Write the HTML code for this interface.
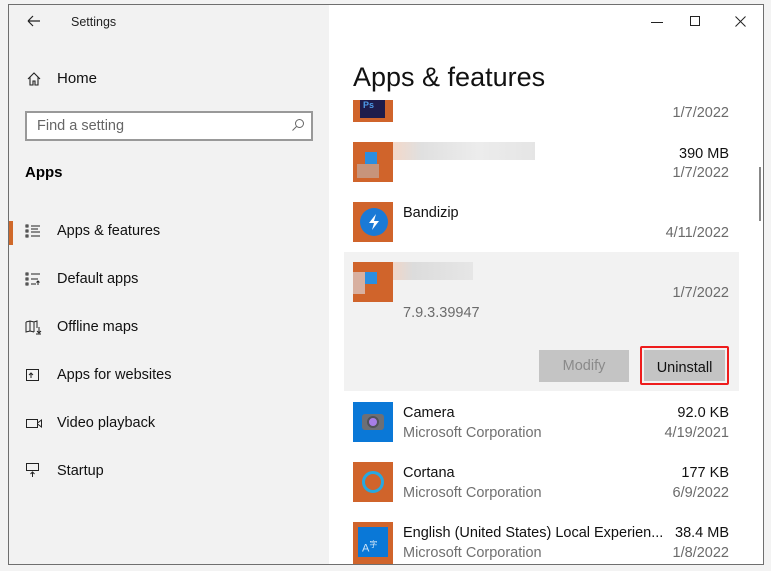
<!DOCTYPE html>
<html><head><style>
*{margin:0;padding:0;box-sizing:border-box}
body{width:771px;height:571px;background:#f3f3f3;position:relative;overflow:hidden;font-family:"Liberation Sans",sans-serif;color:#000}
.win{position:absolute;left:8px;top:4px;width:756px;height:561px;border:1px solid #6f6f6f;background:#fff;overflow:hidden}
.side{position:absolute;left:0;top:0;width:320px;height:100%;background:#f2f2f2}
.t{position:absolute;white-space:nowrap}
.nav{position:absolute;left:48px;font-size:14.5px;color:#111}
.ic{position:absolute;left:17px}
.sq{position:absolute;width:40px;height:40px}
.r{position:absolute;right:0;text-align:right;font-size:14.5px;color:#6b6b6b}
</style></head><body>
<div class="win">
<div class="side">
 <svg class="ic" style="left:18px;top:10px" width="14" height="12"><path d="M1 6H13M1 6L6 1M1 6L6 11" stroke="#222" fill="none" stroke-width="1.2"/></svg>
 <div class="t" style="left:62px;top:10px;font-size:12.5px;color:#222">Settings</div>
 <svg class="ic" style="top:66px" width="16" height="16"><path d="M2 8L8 2L14 8M4 6V14H7V10H9V14H12V6" stroke="#222" fill="none" stroke-width="1.1"/></svg>
 <div class="t" style="left:48px;top:65px;font-size:15px;color:#111">Home</div>
 <div style="position:absolute;left:16px;top:106px;width:288px;height:30px;border:2px solid #999;background:#fff"></div>
 <div class="t" style="left:28px;top:113px;font-size:14.5px;color:#666">Find a setting</div>
 <svg style="position:absolute;left:282px;top:113px" width="14" height="14"><circle cx="8.5" cy="5.5" r="4" stroke="#666" fill="none"/><path d="M5.5 8.5L1.5 12.5" stroke="#666"/></svg>
 <div class="t" style="left:16px;top:159px;font-size:15px;font-weight:bold">Apps</div>
 <div style="position:absolute;left:0;top:216px;width:4px;height:24px;background:#d0692a"></div>
 <svg class="ic" style="left:16px;top:219px" width="16" height="14"><path d="M1 1h2v2H1zM1 6h2v2H1zM1 11h2v2H1zM6 2h9M6 5h7M6 8h9M6 12h9" stroke="#222" fill="none"/></svg>
 <div class="nav" style="top:218px">Apps &amp; features</div>
 <svg class="ic" style="left:16px;top:267px" width="16" height="14"><path d="M1 1h2v2H1zM1 6h2v2H1zM1 11h2v2H1zM6 2h9M6 7h7M6 12h5M13 13V9M11.5 10.5L13 9l1.5 1.5" stroke="#222" fill="none"/></svg>
 <div class="nav" style="top:266px">Default apps</div>
 <svg class="ic" style="left:16px;top:315px" width="17" height="15"><path d="M1 2L5 1L9 2L12 1V8M1 2V12L5 11L9 12M5 1V11M9 2V12M14 7V13M12 11L14 13L16 11M11 14H16" stroke="#222" fill="none"/></svg>
 <div class="nav" style="top:314px">Offline maps</div>
 <svg class="ic" style="left:16px;top:363px" width="16" height="14"><path d="M1.5 1.5H13.5V12.5H1.5ZM6 10V5M4 7L6 5L8 7" stroke="#222" fill="none"/></svg>
 <div class="nav" style="top:362px">Apps for websites</div>
 <svg class="ic" style="left:16px;top:412px" width="18" height="12"><path d="M1.5 2.5H12.5V10.5H1.5ZM12.5 6L16.5 3V10L12.5 7" stroke="#222" fill="none"/></svg>
 <div class="nav" style="top:410px">Video playback</div>
 <svg class="ic" style="left:16px;top:457px" width="16" height="16"><path d="M1.5 1.5H13.5V8.5H1.5ZM7.5 15V10M5.5 12L7.5 10L9.5 12" stroke="#222" fill="none"/></svg>
 <div class="nav" style="top:458px">Startup</div>
</div>
<div style="position:absolute;left:642px;top:17px;width:12px;height:1px;background:#222"></div>
<div style="position:absolute;left:681px;top:11px;width:10px;height:10px;border:1px solid #222"></div>
<svg style="position:absolute;left:726px;top:11px" width="11" height="11"><path d="M0.5 0.5L10.5 10.5M10.5 0.5L0.5 10.5" stroke="#222"/></svg>
<div class="t" style="left:344px;top:57px;font-size:27px;color:#111">Apps &amp; features</div>
<div style="position:absolute;left:750px;top:162px;width:2px;height:54px;background:#888"></div>
</div>
<div class="sq" style="left:353px;top:100px;height:22px;background:#d0642b"><div style="position:absolute;left:7px;top:0;width:25px;height:18px;background:#1e1c4b;color:#4d9be8;font-size:9px;font-weight:bold;padding-left:3px">Ps</div></div>
<div class="r" style="left:344px;width:385px;top:105px">1/7/2022</div>

<div class="sq" style="left:353px;top:142px;background:#d0642b"><div style="position:absolute;left:12px;top:10px;width:12px;height:12px;background:#2b8ee0"></div><div style="position:absolute;left:4px;top:22px;width:22px;height:14px;background:#c4a090;opacity:.8"></div></div>
<div style="position:absolute;left:393px;top:142px;width:142px;height:18px;background:linear-gradient(90deg,#f3d8c9,#e0e0e0 20%,#ececec 60%,#e5e5e5)"></div>
<div class="r" style="left:344px;width:385px;top:146px;color:#111">390 MB</div>
<div class="r" style="left:344px;width:385px;top:165px">1/7/2022</div>

<div class="sq" style="left:353px;top:202px;background:#d0642b"><div style="position:absolute;left:7px;top:6px;width:28px;height:28px;border-radius:50%;background:#1a7ad6"></div><svg style="position:absolute;left:12px;top:11px" width="18" height="18"><path d="M11 1L4 10H9L7 17L14 8H9Z" fill="#fff"/></svg></div>
<div class="t" style="left:403px;top:205px;font-size:14.5px;color:#111">Bandizip</div>
<div class="r" style="left:344px;width:385px;top:225px">4/11/2022</div>

<div style="position:absolute;left:344px;top:252px;width:395px;height:139px;background:#f2f2f2"></div>
<div class="sq" style="left:353px;top:262px;background:#d0642b"><div style="position:absolute;left:12px;top:10px;width:12px;height:12px;background:#2b8ee0"></div><div style="position:absolute;left:0;top:10px;width:12px;height:22px;background:#d8b0a0"></div></div>
<div style="position:absolute;left:393px;top:262px;width:80px;height:18px;background:linear-gradient(90deg,#f0d6c8,#dcdcdc 25%,#e6e6e6)"></div>
<div class="r" style="left:344px;width:385px;top:285px">1/7/2022</div>
<div class="t" style="left:403px;top:305px;font-size:14.5px;color:#6b6b6b">7.9.3.39947</div>
<div style="position:absolute;left:539px;top:350px;width:90px;height:32px;background:#c4c4c4;color:#8a8a8a;font-size:14.5px;text-align:center;line-height:33px">Modify</div>
<div style="position:absolute;left:640px;top:346px;width:89px;height:39px;border:2px solid #ee1c1c;border-radius:2px;padding:2px"><div style="background:#c4c4c4;height:31px;color:#111;font-size:14.5px;text-align:center;line-height:36px">Uninstall</div></div>

<div class="sq" style="left:353px;top:402px;background:#0a78d7"><div style="position:absolute;left:9px;top:12px;width:22px;height:16px;background:#6d6f75;border-radius:3px"></div><div style="position:absolute;left:14px;top:14px;width:12px;height:12px;border-radius:50%;background:#a77ee8;border:2px solid #50525a"></div></div>
<div class="t" style="left:403px;top:405px;font-size:14.5px;color:#111">Camera</div>
<div class="t" style="left:403px;top:425px;font-size:14.5px;color:#707070">Microsoft Corporation</div>
<div class="r" style="left:344px;width:385px;top:405px;color:#111">92.0 KB</div>
<div class="r" style="left:344px;width:385px;top:425px">4/19/2021</div>

<div class="sq" style="left:353px;top:462px;background:#d0642b"><div style="position:absolute;left:9px;top:9px;width:22px;height:22px;border-radius:50%;border:3px solid #27a8e0"></div></div>
<div class="t" style="left:403px;top:465px;font-size:14.5px;color:#111">Cortana</div>
<div class="t" style="left:403px;top:485px;font-size:14.5px;color:#707070">Microsoft Corporation</div>
<div class="r" style="left:344px;width:385px;top:465px;color:#111">177 KB</div>
<div class="r" style="left:344px;width:385px;top:485px">6/9/2022</div>

<div class="sq" style="left:353px;top:522px;height:42px;background:#d0642b"><div style="position:absolute;left:5px;top:5px;width:30px;height:30px;background:#0a78d7;color:#cfe4f7;font-size:11px;padding:12px 0 0 4px">A<sup style="font-size:8px">字</sup></div></div>
<div class="t" style="left:403px;top:525px;font-size:14.5px;color:#111">English (United States) Local Experien...</div>
<div class="t" style="left:403px;top:545px;font-size:14.5px;color:#707070">Microsoft Corporation</div>
<div class="r" style="left:344px;width:385px;top:525px;color:#111">38.4 MB</div>
<div class="r" style="left:344px;width:385px;top:545px">1/8/2022</div>
</body></html>
